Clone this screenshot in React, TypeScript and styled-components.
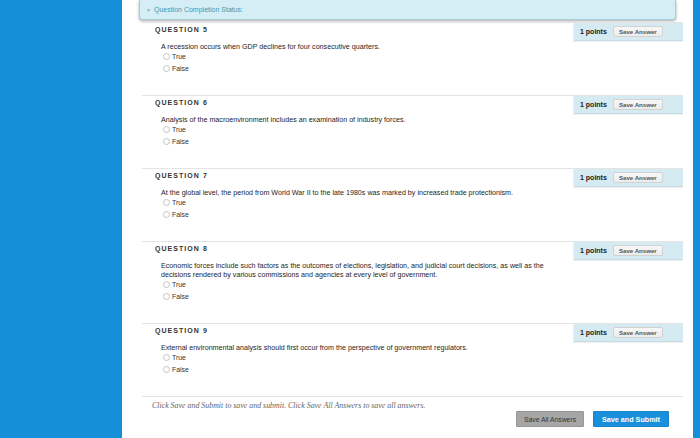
import React from "react";
import styled, { createGlobalStyle } from "styled-components";

const Global = createGlobalStyle`
  html, body { margin: 0; padding: 0; background: #158fd8; }
  body { font-family: "Liberation Sans", Arial, sans-serif; }
`;

const Page = styled.div`
  display: flex;
  height: 438px;
  width: 700px;
  overflow: hidden;
  background: #158fd8;
`;

const Side = styled.div<{ $w: number }>`
  width: ${(p) => p.$w}px;
  flex: none;
  background: #158fd8;
`;

const Main = styled.div`
  width: 571px;
  flex: none;
  background: #ffffff;
  display: flex;
  flex-direction: column;
`;

const StatusBar = styled.div`
  margin-left: 17px;
  width: 537px;
  height: 20px;
  box-sizing: border-box;
  background: #d5edf4;
  border: 1px solid #a8cdd8;
  border-top: none;
  border-radius: 0 0 3px 3px;
  box-shadow: 0 1px 3px rgba(0, 0, 0, 0.35);
  display: flex;
  align-items: center;
  padding-left: 6px;
  gap: 3px;
  font-size: 7px;
  color: #3a9bb4;
  margin-bottom: 2px;
`;

const Caret = styled.span`
  font-size: 5px;
  color: #7fb3c2;
`;

const Block = styled.div`
  margin-left: 20px;
  margin-right: 10px;
  border-top: 1px solid #e4e4e4;
  padding-bottom: 22px;
  display: flex;
  flex-direction: column;
`;

const Header = styled.div`
  display: flex;
  justify-content: space-between;
  align-items: flex-start;
`;

const Title = styled.div`
  margin-top: 3px;
  padding-left: 13px;
  font-size: 7px;
  line-height: 8px;
  font-weight: bold;
  letter-spacing: 1.05px;
  color: #333;
`;

const PointsBox = styled.div`
  width: 109px;
  height: 18px;
  box-sizing: border-box;
  background: #d6eaf2;
  border-bottom: 1px solid #c3dce6;
  box-shadow: -1px 1px 1px rgba(0, 0, 0, 0.06);
  display: flex;
  align-items: center;
  padding-left: 6px;
  gap: 6px;
`;

const Points = styled.span`
  font-size: 7px;
  font-weight: bold;
  color: #222;
`;

const SmallButton = styled.button`
  width: 50px;
  height: 11px;
  padding: 0;
  border: 1px solid #d2d2d2;
  border-radius: 2px;
  background: linear-gradient(#f7f7f7, #ececec);
  font-family: "Liberation Sans", Arial, sans-serif;
  font-size: 6.1px;
  font-weight: bold;
  color: #555;
`;

const QText = styled.div`
  margin-top: 2px;
  padding-left: 19px;
  max-width: 392px;
  font-size: 7.15px;
  line-height: 9px;
  color: #1e1e1e;
`;

const Options = styled.div`
  display: flex;
  flex-direction: column;
  gap: 3px;
  padding-left: 21px;
`;

const Option = styled.label`
  display: flex;
  align-items: center;
  gap: 2px;
  height: 9px;
  font-size: 6.9px;
  color: #333;
`;

const Radio = styled.span`
  width: 7px;
  height: 7px;
  box-sizing: border-box;
  border-radius: 50%;
  border: 1px solid #c4c4c4;
  background: #fff;
`;

const Footer = styled.div`
  margin-left: 20px;
  margin-right: 10px;
  border-top: 1px solid #e4e4e4;
  padding: 4px 14px 0 10px;
  display: flex;
  flex-direction: column;
`;

const Note = styled.div`
  font-family: "Liberation Serif", "Times New Roman", serif;
  font-style: italic;
  font-size: 7.9px;
  line-height: 9px;
  color: #666;
`;

const Actions = styled.div`
  display: flex;
  justify-content: flex-end;
  gap: 9px;
  margin-top: 1px;
`;

const ActionButton = styled.button<{ $primary?: boolean }>`
  height: 16px;
  width: ${(p) => (p.$primary ? 76 : 68)}px;
  padding: 0;
  border: 1px solid ${(p) => (p.$primary ? "#1683c8" : "#979797")};
  border-radius: 1px;
  background: ${(p) => (p.$primary ? "#1a8fdb" : "#a6a6a6")};
  color: ${(p) => (p.$primary ? "#fff" : "#333")};
  font-family: "Liberation Sans", Arial, sans-serif;
  font-size: ${(p) => (p.$primary ? 7.2 : 6.8)}px;
  font-weight: ${(p) => (p.$primary ? "bold" : "normal")};
`;

const questions = [
  { n: 5, text: "A recession occurs when GDP declines for four consecutive quarters." },
  { n: 6, text: "Analysis of the macroenvironment includes an examination of industry forces." },
  {
    n: 7,
    text: "At the global level, the period from World War II to the late 1980s was marked by increased trade protectionism.",
  },
  {
    n: 8,
    text: "Economic forces include such factors as the outcomes of elections, legislation, and judicial court decisions, as well as the decisions rendered by various commissions and agencies at every level of government.",
  },
  {
    n: 9,
    text: "External environmental analysis should first occur from the perspective of government regulators.",
  },
];

export default function App() {
  return (
    <>
      <Global />
      <Page>
        <Side $w={122} />
        <Main>
          <StatusBar>
            <Caret>▼</Caret>
            <span>Question Completion Status:</span>
          </StatusBar>
          {questions.map((q) => (
            <Block key={q.n}>
              <Header>
                <Title>QUESTION {q.n}</Title>
                <PointsBox>
                  <Points>1 points</Points>
                  <SmallButton>Save Answer</SmallButton>
                </PointsBox>
              </Header>
              <QText>{q.text}</QText>
              <Options>
                <Option>
                  <Radio />
                  True
                </Option>
                <Option>
                  <Radio />
                  False
                </Option>
              </Options>
            </Block>
          ))}
          <Footer>
            <Note>Click Save and Submit to save and submit. Click Save All Answers to save all answers.</Note>
            <Actions>
              <ActionButton>Save All Answers</ActionButton>
              <ActionButton $primary>Save and Submit</ActionButton>
            </Actions>
          </Footer>
        </Main>
        <Side $w={7} />
      </Page>
    </>
  );
}
